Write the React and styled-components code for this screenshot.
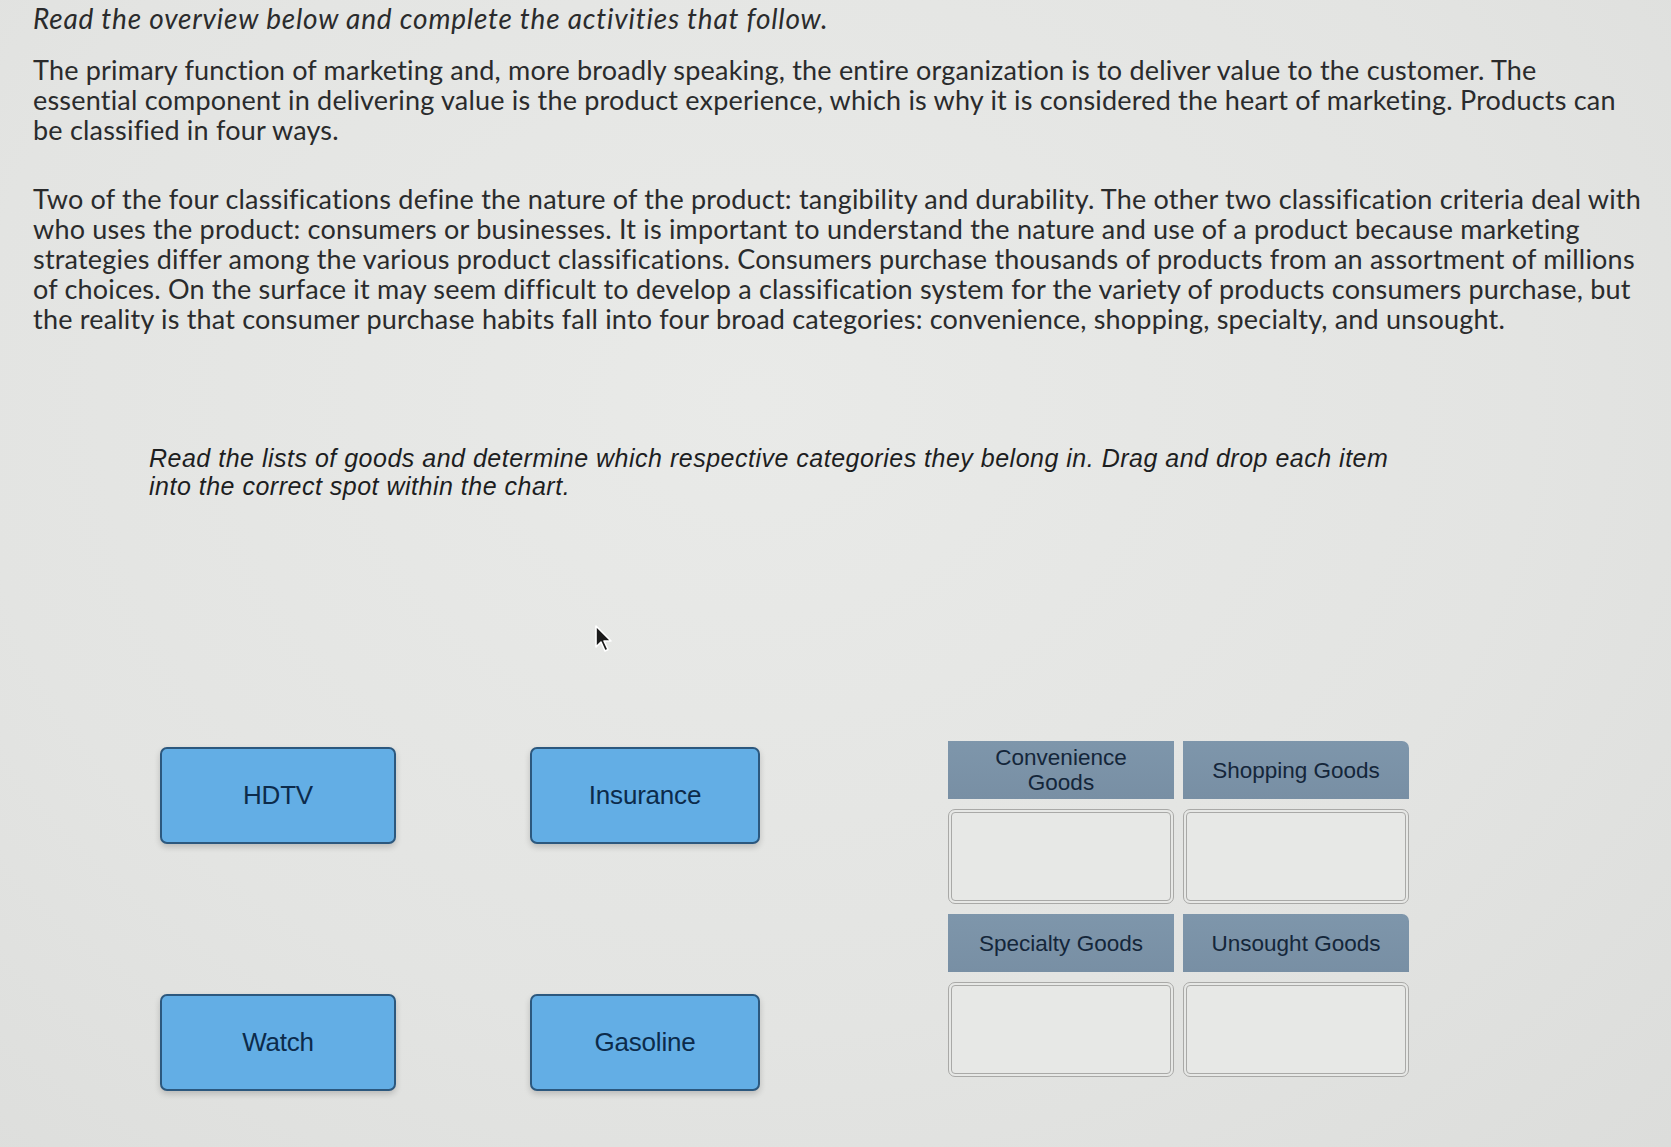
import React from 'react';
import styled, { createGlobalStyle } from 'styled-components';

const GlobalStyle = createGlobalStyle`
  html, body {
    margin: 0;
    padding: 0;
    background: #e4e5e3;
  }
  body {
    font-family: "Lato", "Liberation Sans", sans-serif;
    color: #2a2b2c;
  }
`;

const Page = styled.div`
  position: relative;
  width: 1671px;
  height: 1147px;
  overflow: hidden;
  box-sizing: border-box;
  padding: 3px 0 0 33px;
  background: radial-gradient(ellipse at 45% 35%, #e9eae8 0%, #e3e4e2 60%, #dcdddb 100%);
`;

const Lead = styled.p`
  margin: 0;
  font-size: 28px;
  line-height: 30px;
  font-style: italic;
  letter-spacing: 0.8px;
  white-space: nowrap;
`;

const Para = styled.p`
  margin: ${p => p.$top}px 0 0 0;
  font-size: 27px;
  line-height: 30px;
  letter-spacing: 0.2px;
  white-space: nowrap;
`;

const Instruction = styled.p`
  margin: 110px 0 0 116px;
  font-family: "Liberation Sans", Arial, sans-serif;
  font-style: italic;
  font-size: 25px;
  line-height: 28px;
  letter-spacing: 0.5px;
  white-space: nowrap;
  color: #1d1e1f;
`;

const Activity = styled.div`
  display: flex;
  align-items: flex-start;
  margin: 241px 0 0 127px;
  gap: 188px;
`;

const Pool = styled.div`
  display: grid;
  grid-template-columns: 236px 230px;
  column-gap: 134px;
  row-gap: 150px;
  padding-top: 6px;
`;

const Item = styled.div`
  display: flex;
  align-items: center;
  justify-content: center;
  height: 97px;
  box-sizing: border-box;
  background: #63aee5;
  border: 2px solid #2c587e;
  border-radius: 7px;
  box-shadow: 0 3px 6px rgba(0, 0, 0, 0.18);
  font-family: "Liberation Sans", Arial, sans-serif;
  font-size: 26px;
  color: #0c2b4b;
  letter-spacing: -0.2px;
`;

const Chart = styled.div`
  display: grid;
  grid-template-columns: 226px 226px;
  grid-template-rows: 58px 95px 58px 95px;
  column-gap: 9px;
  row-gap: 10px;
`;

const Header = styled.div`
  display: flex;
  align-items: center;
  justify-content: center;
  padding: 0 22px;
  text-align: center;
  background: linear-gradient(180deg, #7e96ab 0%, #788fa4 100%);
  border-radius: ${p => (p.$right ? '0 7px 0 0' : '0')};
  font-family: "Liberation Sans", Arial, sans-serif;
  font-size: 22.5px;
  line-height: 25px;
  color: #14263a;
`;

const Drop = styled.div`
  box-sizing: border-box;
  border: 4px double #a9a9a7;
  border-radius: 7px;
  background: #e7e8e6;
`;

const Cursor = styled.svg`
  position: absolute;
  left: 594px;
  top: 624px;
  width: 22px;
  height: 30px;
`;

export default function App() {
  return (
    <>
      <GlobalStyle />
      <Page>
        <Lead>Read the overview below and complete the activities that follow.</Lead>
        <Para $top={22}>
          The primary function of marketing and, more broadly speaking, the entire organization is to deliver value to the customer. The<br />
          essential component in delivering value is the product experience, which is why it is considered the heart of marketing. Products can<br />
          be classified in four ways.
        </Para>
        <Para $top={39}>
          Two of the four classifications define the nature of the product: tangibility and durability. The other two classification criteria deal with<br />
          who uses the product: consumers or businesses. It is important to understand the nature and use of a product because marketing<br />
          strategies differ among the various product classifications. Consumers purchase thousands of products from an assortment of millions<br />
          of choices. On the surface it may seem difficult to develop a classification system for the variety of products consumers purchase, but<br />
          the reality is that consumer purchase habits fall into four broad categories: convenience, shopping, specialty, and unsought.
        </Para>
        <Instruction>
          Read the lists of goods and determine which respective categories they belong in. Drag and drop each item<br />
          into the correct spot within the chart.
        </Instruction>
        <Activity>
          <Pool>
            <Item>HDTV</Item>
            <Item>Insurance</Item>
            <Item>Watch</Item>
            <Item>Gasoline</Item>
          </Pool>
          <Chart>
            <Header>Convenience Goods</Header>
            <Header $right>Shopping Goods</Header>
            <Drop />
            <Drop />
            <Header>Specialty Goods</Header>
            <Header $right>Unsought Goods</Header>
            <Drop />
            <Drop />
          </Chart>
        </Activity>
        <Cursor viewBox="0 0 22 30">
          <path d="M2 2 L2 23 L7 18 L11 27 L14 25.5 L10 17 L17 17 Z" fill="#1a1a1a" stroke="#ffffff" strokeWidth="1.6" strokeLinejoin="round" />
        </Cursor>
      </Page>
    </>
  );
}
